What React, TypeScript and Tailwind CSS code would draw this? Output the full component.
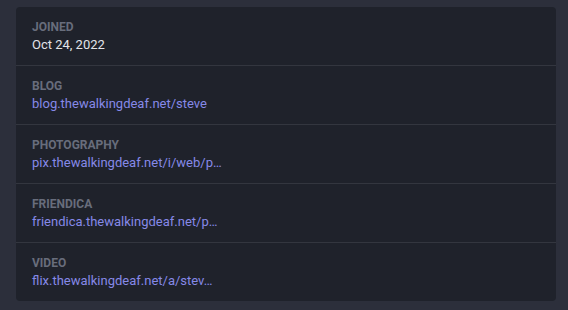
import React from 'react';

const rows = [
    { label: 'Joined', value: 'Oct 24, 2022', link: false },
    { label: 'Blog', value: 'blog.thewalkingdeaf.net/steve', link: true },
    { label: 'Photography', value: 'pix.thewalkingdeaf.net/i/web/profile/steve', link: true },
    { label: 'Friendica', value: 'friendica.thewalkingdeaf.net/profile/steve', link: true },
    { label: 'Video', value: 'flix.thewalkingdeaf.net/a/steve/video-channels', link: true },
];

// links get cut at 30 chars, like the original
const shorten = (s: string) => (s.length > 30 ? s.slice(0, 30) + '…' : s);

const App: React.FC = () => {
    return (
        <div className="w-[568px] h-[310px] bg-[#2c2f3b] pl-4 pr-3 pt-[7px]" style={{ fontFamily: 'Roboto, "Noto Sans", sans-serif' }}>
            <div className="bg-[#1f222b] rounded divide-y divide-[#33363f]">
                {rows.map(row => (
                    <div key={row.label} className="px-4 pt-3 pb-2.5">
                        <div className="text-xs leading-4 font-bold uppercase text-[#686d7c]">{row.label}</div>
                        {row.link ? (
                            <a className="block text-[13px] leading-5 text-[#8689e8]">{shorten(row.value)}</a>
                        ) : (
                            <div className="text-[13px] leading-5 text-[#e2e4e9]">{row.value}</div>
                        )}
                    </div>
                ))}
            </div>
        </div>
    );
};

export default App;
